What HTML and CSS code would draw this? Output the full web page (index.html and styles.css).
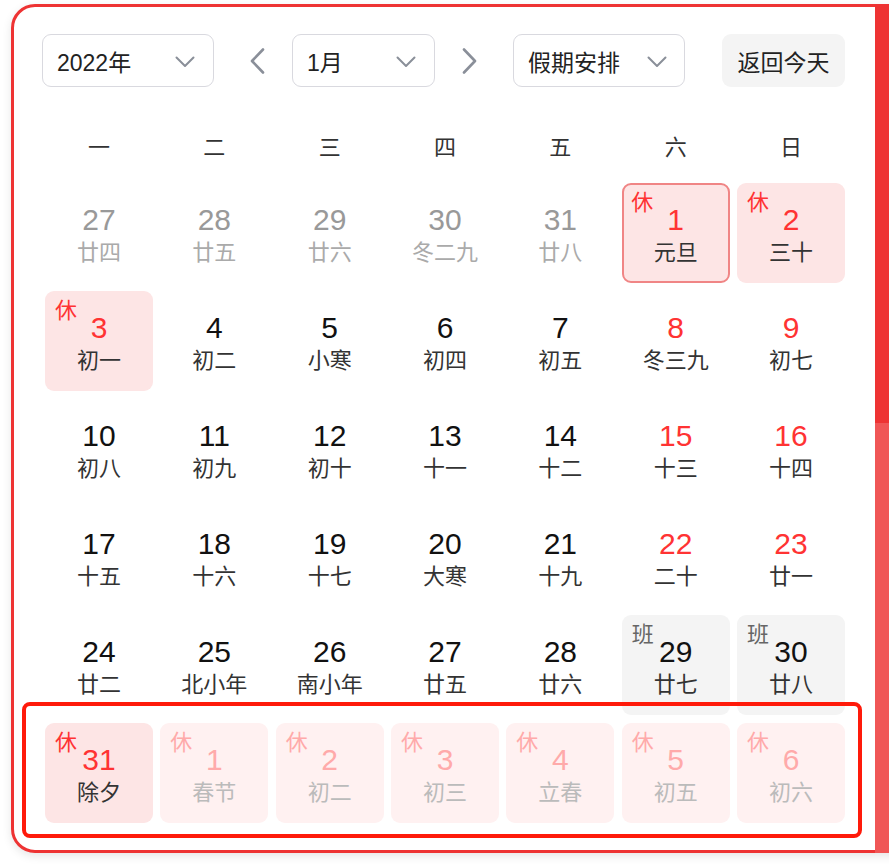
FILE: index.html
```html
<!DOCTYPE html>
<html lang="zh-CN">
<head>
<meta charset="utf-8">
<title>日历</title>
<link rel="stylesheet" href="styles.css">
</head>
<body>
<div class="frame">
  <div class="toolbar">
    <div class="select sel-year"><span>2022年</span>
      <svg class="caret" width="20" height="12" viewBox="0 0 20 12"><path d="M1.5 1.5 L10 10 L18.5 1.5" fill="none" stroke="#8a8f99" stroke-width="2" stroke-linecap="round" stroke-linejoin="round"/></svg>
    </div>
    <svg class="arrow" width="15" height="26" viewBox="0 0 15 26"><path d="M13 1.5 L2 13 L13 24.5" fill="none" stroke="#8a8f99" stroke-width="2.6" stroke-linecap="round" stroke-linejoin="round"/></svg>
    <div class="select sel-month"><span>1月</span>
      <svg class="caret" width="20" height="12" viewBox="0 0 20 12"><path d="M1.5 1.5 L10 10 L18.5 1.5" fill="none" stroke="#8a8f99" stroke-width="2" stroke-linecap="round" stroke-linejoin="round"/></svg>
    </div>
    <svg class="arrow" width="15" height="26" viewBox="0 0 15 26"><path d="M2 1.5 L13 13 L2 24.5" fill="none" stroke="#8a8f99" stroke-width="2.6" stroke-linecap="round" stroke-linejoin="round"/></svg>
    <div class="select sel-holiday"><span>假期安排</span>
      <svg class="caret" width="20" height="12" viewBox="0 0 20 12"><path d="M1.5 1.5 L10 10 L18.5 1.5" fill="none" stroke="#8a8f99" stroke-width="2" stroke-linecap="round" stroke-linejoin="round"/></svg>
    </div>
    <div class="today-btn">返回今天</div>
  </div>

  <div class="weekdays">
    <div>一</div><div>二</div><div>三</div><div>四</div><div>五</div><div>六</div><div>日</div>
  </div>

  <div class="grid">
    <div class="cell prev"><div class="num">27</div><div class="lunar">廿四</div></div>
    <div class="cell prev"><div class="num">28</div><div class="lunar">廿五</div></div>
    <div class="cell prev"><div class="num">29</div><div class="lunar">廿六</div></div>
    <div class="cell prev"><div class="num">30</div><div class="lunar">冬二九</div></div>
    <div class="cell prev"><div class="num">31</div><div class="lunar">廿八</div></div>
    <div class="cell rest selected"><span class="badge">休</span><div class="num">1</div><div class="lunar">元旦</div></div>
    <div class="cell rest"><span class="badge">休</span><div class="num">2</div><div class="lunar">三十</div></div>

    <div class="cell rest"><span class="badge">休</span><div class="num">3</div><div class="lunar">初一</div></div>
    <div class="cell"><div class="num">4</div><div class="lunar">初二</div></div>
    <div class="cell"><div class="num">5</div><div class="lunar">小寒</div></div>
    <div class="cell"><div class="num">6</div><div class="lunar">初四</div></div>
    <div class="cell"><div class="num">7</div><div class="lunar">初五</div></div>
    <div class="cell weekend"><div class="num">8</div><div class="lunar">冬三九</div></div>
    <div class="cell weekend"><div class="num">9</div><div class="lunar">初七</div></div>

    <div class="cell"><div class="num">10</div><div class="lunar">初八</div></div>
    <div class="cell"><div class="num">11</div><div class="lunar">初九</div></div>
    <div class="cell"><div class="num">12</div><div class="lunar">初十</div></div>
    <div class="cell"><div class="num">13</div><div class="lunar">十一</div></div>
    <div class="cell"><div class="num">14</div><div class="lunar">十二</div></div>
    <div class="cell weekend"><div class="num">15</div><div class="lunar">十三</div></div>
    <div class="cell weekend"><div class="num">16</div><div class="lunar">十四</div></div>

    <div class="cell"><div class="num">17</div><div class="lunar">十五</div></div>
    <div class="cell"><div class="num">18</div><div class="lunar">十六</div></div>
    <div class="cell"><div class="num">19</div><div class="lunar">十七</div></div>
    <div class="cell"><div class="num">20</div><div class="lunar">大寒</div></div>
    <div class="cell"><div class="num">21</div><div class="lunar">十九</div></div>
    <div class="cell weekend"><div class="num">22</div><div class="lunar">二十</div></div>
    <div class="cell weekend"><div class="num">23</div><div class="lunar">廿一</div></div>

    <div class="cell"><div class="num">24</div><div class="lunar">廿二</div></div>
    <div class="cell"><div class="num">25</div><div class="lunar">北小年</div></div>
    <div class="cell"><div class="num">26</div><div class="lunar">南小年</div></div>
    <div class="cell"><div class="num">27</div><div class="lunar">廿五</div></div>
    <div class="cell"><div class="num">28</div><div class="lunar">廿六</div></div>
    <div class="cell work"><span class="badge">班</span><div class="num">29</div><div class="lunar">廿七</div></div>
    <div class="cell work"><span class="badge">班</span><div class="num">30</div><div class="lunar">廿八</div></div>

    <div class="cell rest"><span class="badge">休</span><div class="num">31</div><div class="lunar">除夕</div></div>
    <div class="cell rest next"><span class="badge">休</span><div class="num">1</div><div class="lunar">春节</div></div>
    <div class="cell rest next"><span class="badge">休</span><div class="num">2</div><div class="lunar">初二</div></div>
    <div class="cell rest next"><span class="badge">休</span><div class="num">3</div><div class="lunar">初三</div></div>
    <div class="cell rest next"><span class="badge">休</span><div class="num">4</div><div class="lunar">立春</div></div>
    <div class="cell rest next"><span class="badge">休</span><div class="num">5</div><div class="lunar">初五</div></div>
    <div class="cell rest next"><span class="badge">休</span><div class="num">6</div><div class="lunar">初六</div></div>
  </div>
</div>
<div class="highlight"></div>
<div class="scrollbar"><div class="thumb"></div></div>
</body>
</html>
```

FILE: styles.css
```css
html, body {
  margin: 0;
  padding: 0;
}
body {
  width: 889px;
  height: 866px;
  overflow: hidden;
  position: relative;
  background: #fff;
  font-family: "Liberation Sans", "Noto Sans CJK SC", sans-serif;
  color: #333;
}
.frame {
  box-sizing: border-box;
  margin: 4px 0 0 11px;
  width: 920px;
  height: 849px;
  border: 3px solid #ee3333;
  border-radius: 24px;
  padding: 27px 0 0 28px;
  box-shadow: 0 3px 10px rgba(0, 0, 0, 0.10);
  background: #fff;
}
.toolbar {
  display: flex;
  align-items: center;
  height: 53px;
  width: 803px;
}
.select {
  box-sizing: border-box;
  height: 53px;
  border: 1px solid #d9d9df;
  border-radius: 9px;
  display: flex;
  align-items: center;
  justify-content: space-between;
  padding: 0 18px 0 14px;
  font-size: 23px;
  color: #222;
}
.sel-year { width: 172px; }
.sel-month { width: 143px; }
.sel-holiday { width: 172px; padding-right: 17px; }
.caret { display: block; margin-top: 2px; }
.arrow { display: block; }
.sel-year + .arrow { margin: 0 27px 0 36px; }
.sel-month + .arrow { margin: 0 36px 0 27px; }
.today-btn {
  margin-left: auto;
  box-sizing: border-box;
  width: 123px;
  height: 53px;
  border-radius: 9px;
  background: #f4f4f4;
  display: flex;
  align-items: center;
  justify-content: center;
  font-size: 23px;
  color: #222;
}
.weekdays {
  display: grid;
  grid-template-columns: repeat(7, 1fr);
  column-gap: 7.33px;
  width: 800px;
  margin: 41px 0 0 3px;
  height: 40px;
  line-height: 40px;
  text-align: center;
  font-size: 22px;
  color: #333;
}
.grid {
  display: grid;
  grid-template-columns: repeat(7, 1fr);
  grid-auto-rows: 100px;
  column-gap: 7.33px;
  row-gap: 8px;
  width: 800px;
  margin: 15px 0 0 3px;
}
.cell {
  position: relative;
  box-sizing: border-box;
  border-radius: 9px;
  padding-top: 20px;
  text-align: center;
}
.num {
  font-size: 30px;
  line-height: 34px;
  color: #111;
}
.lunar {
  font-size: 22px;
  line-height: 32px;
  color: #333;
}
.badge {
  position: absolute;
  top: 7px;
  left: 10px;
  font-size: 22px;
  line-height: 26px;
}
.prev .num { color: #999; }
.prev .lunar { color: #aaa; }
.weekend .num { color: #f33; }
.rest { background: #fde5e5; }
.rest .num, .rest .badge { color: #f33; }
.selected {
  border: 2.5px solid #f08585;
  padding-top: 17.5px;
}
.selected .badge { top: 4.5px; left: 7.5px; }
.work { background: #f4f4f4; }
.work .badge { color: #666; }
.next { background: #fff1f1; }
.next .num, .next .badge { color: #ffaaaa; }
.next .lunar { color: #bbb; }
.highlight {
  position: absolute;
  left: 22px;
  top: 702px;
  width: 840px;
  height: 136px;
  box-sizing: border-box;
  border: 4px solid #ff1a0a;
  border-radius: 8px;
}
.scrollbar {
  position: absolute;
  left: 875px;
  top: 4px;
  width: 14px;
  height: 849px;
  background: #f05656;
}
.thumb {
  height: 419px;
  background: #ee3333;
}
```
